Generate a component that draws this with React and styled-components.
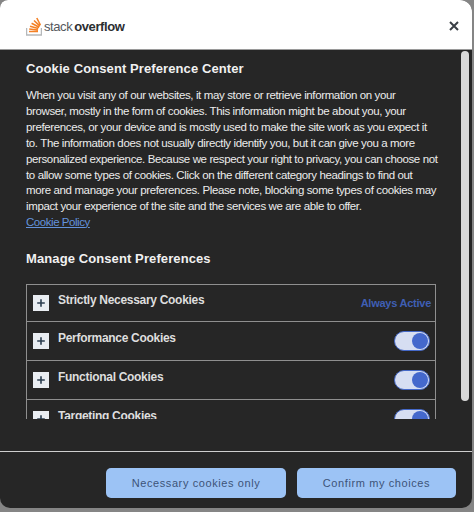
import React from "react";
import styled, { createGlobalStyle } from "styled-components";

const Global = createGlobalStyle`
  html, body { margin: 0; padding: 0; height: 100%; background: #858585; }
  body { font-family: "Liberation Sans", Arial, sans-serif; overflow: hidden; }
`;
const Dialog = styled.div`
  width: 472px; height: 508px; background: #262626; border-radius: 8px 12px 10px 10px;
  overflow: hidden; display: flex; flex-direction: column;
`;
const Header = styled.header`
  flex: none; background: #fff; border-bottom: 1px solid #9a9a9a;
  display: flex; align-items: center; justify-content: space-between;
  padding: 3px 13px 0 26px; box-sizing: border-box; height: 50px;
`;
const Logo = styled.div`
  display: flex; align-items: center; gap: 2px; font-size: 13px; letter-spacing: -0.42px; color: #55585c;
  b { color: #2b2e31; font-weight: 700; margin-left: 2px; }
`;
const Close = styled.button`
  border: 0; background: none; padding: 0; width: 10px; height: 10px; display: flex;
`;
const Middle = styled.div`
  height: 369px; flex: none; position: relative; overflow: hidden; display: flex;
`;
const Scroll = styled.div`
  width: 432px; padding: 11px 0 0 26px; flex: none; box-sizing: content-box; overflow: hidden;
`;
const Title = styled.h2`
  margin: 0; font-size: 13px; line-height: 16px; font-weight: 700; color: #f1f1f1; letter-spacing: 0.1px;
`;
const Text = styled.p`
  margin: 11px 0 0; white-space: nowrap; font-size: 11.5px; line-height: 15.9px; color: #ececec; letter-spacing: -0.375px;
  a { color: #6393dc; text-decoration: underline; display: block; margin-top: -0.5px; letter-spacing: -0.45px; }
`;
const Sub = styled(Title)`
  margin-top: 20px;
`;
const List = styled.div`
  margin-top: 17px; width: 410px; box-sizing: border-box; border: 1px solid #8f8f8f; border-bottom: 0;
`;
const Row = styled.div`
  height: 39px; box-sizing: border-box; border-bottom: 1px solid #8f8f8f; display: flex; align-items: center; padding: 0 4px 0 6px;
  &:first-child { height: 37px; }
`;
const Plus = styled.span`
  width: 16px; height: 16px; background: #e9edf2; display: flex; flex: none; align-items: center; justify-content: center; margin-right: 9px;
`;
const RowLabel = styled.span`
  flex: 1; font-size: 12px; font-weight: 700; color: #dedede; position: relative; top: -3px; letter-spacing: -0.3px;
`;
const Active = styled.span`
  font-size: 11px; font-weight: 700; color: #3f5fb4; letter-spacing: -0.25px;
`;
const Toggle = styled.span`
  width: 36px; height: 20px; border-radius: 10px; box-sizing: border-box; background: #d6def2; border: 1px solid #4468c8;
  display: flex; justify-content: flex-end; align-items: center; padding: 1px; margin-right: 1px;
  &::after { content: ""; width: 16px; height: 16px; border-radius: 50%; background: #4468cc; }
`;
const Thumb = styled.div`
  position: absolute; left: 461px; top: 1px; width: 8px; height: 350px; border-radius: 4px; background: #d9d9d9;
`;
const Spacer = styled.div`
  height: 33px; flex: none; border-bottom: 1px solid #cfcfcf; box-sizing: border-box;
`;
const Footer = styled.footer`
  flex: 1; display: flex; justify-content: flex-end; gap: 11px; padding: 16px 16px 0 0;
  align-items: flex-start;
`;
const Btn = styled.button`
  height: 30px; width: ${p => p.$w}px; border: 0; border-radius: 5px; background: #9cc3f5; color: #3d5378;
  font: 11px "Liberation Sans", Arial, sans-serif; letter-spacing: 0.6px; padding: 0;
`;

const Cross = () => (
  <svg width="10" height="10" viewBox="0 0 10 10"><path d="M5 1.2v7.6M1.2 5h7.6" stroke="#2c3e50" strokeWidth="1.6" /></svg>
);
const rows = ["Performance Cookies", "Functional Cookies", "Targeting Cookies"];

export default function App() {
  return (
    <Dialog>
      <Global />
      <Header>
        <Logo>
          <svg width="16" height="20" viewBox="0 0 16 20">
            <path d="M0.5 12v7h15v-7" fill="none" stroke="#b5b8bb" strokeWidth="1.5" />
            <path d="M3 15.5h9M3.2 13l8.8 1M4 10.2l8.3 2.4M5.6 7.3l7.6 4M8 4.5l6 5.6M10.8 2l3.6 7" stroke="#f48024" strokeWidth="1.6" fill="none" />
          </svg>
          <span>stack<b>overflow</b></span>
        </Logo>
        <Close aria-label="Close">
          <svg width="10" height="10" viewBox="0 0 10 10"><path d="M1 1l8 8M9 1l-8 8" stroke="#3a3f45" strokeWidth="2" /></svg>
        </Close>
      </Header>
      <Middle>
        <Scroll>
          <Title>Cookie Consent Preference Center</Title>
          <Text>
            When you visit any of our websites, it may store or retrieve information on your<br />
            browser, mostly in the form of cookies. This information might be about you, your<br />
            preferences, or your device and is mostly used to make the site work as you expect it<br />
            to. The information does not usually directly identify you, but it can give you a more<br />
            personalized experience. Because we respect your right to privacy, you can choose not<br />
            to allow some types of cookies. Click on the different category headings to find out<br />
            more and manage your preferences. Please note, blocking some types of cookies may<br />
            impact your experience of the site and the services we are able to offer.
            <a href="#policy">Cookie Policy</a>
          </Text>
          <Sub>Manage Consent Preferences</Sub>
          <List>
            <Row>
              <Plus><Cross /></Plus>
              <RowLabel>Strictly Necessary Cookies</RowLabel>
              <Active>Always Active</Active>
            </Row>
            {rows.map(label => (
              <Row key={label}>
                <Plus><Cross /></Plus>
                <RowLabel>{label}</RowLabel>
                <Toggle />
              </Row>
            ))}
          </List>
        </Scroll>
        <Thumb />
      </Middle>
      <Spacer />
      <Footer>
        <Btn $w={180}>Necessary cookies only</Btn>
        <Btn $w={159}>Confirm my choices</Btn>
      </Footer>
    </Dialog>
  );
}
